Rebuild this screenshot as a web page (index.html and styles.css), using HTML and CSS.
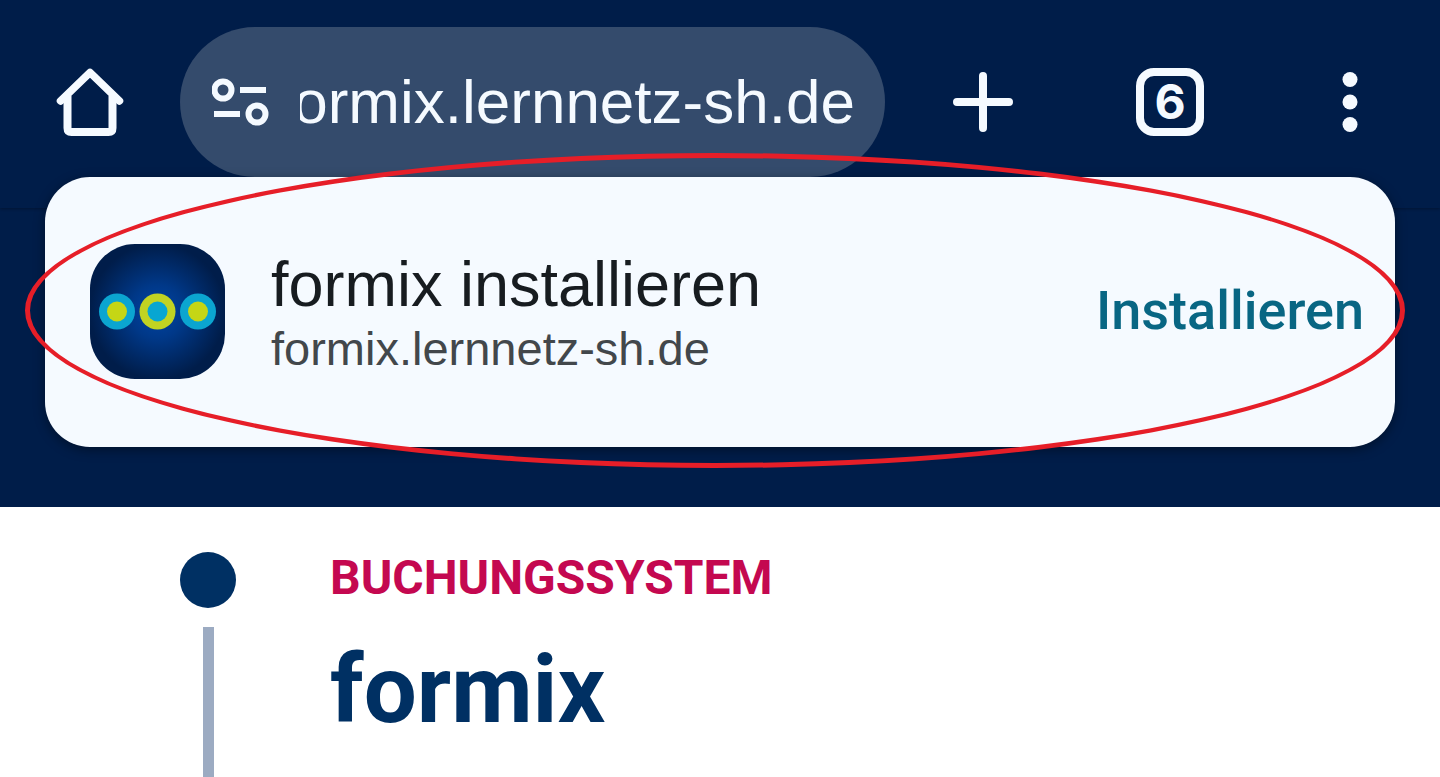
FILE: index.html
```html
<!DOCTYPE html>
<html lang="de">
<head>
    <meta charset="UTF-8">
    <meta name="viewport" content="width=device-width, initial-scale=1.0">
    <title>formix installieren</title>
    <link rel="stylesheet" href="styles.css">
</head>
<body>
    <header class="browser">
        <div class="toolbar">
            <button class="tool" type="button" aria-label="Startseite">
                <svg width="72" height="72" viewBox="0 0 72 72" fill="none" stroke="currentColor" stroke-width="8" stroke-linecap="round" stroke-linejoin="round">
                    <path d="M6.500 35 L36 6.500 L65.500 35" stroke-width="7.500" />
                    <path d="M13.500 30 V62 Q13.500 66 17.500 66 H54.500 Q58.500 66 58.500 62 V30" stroke-linecap="butt" />
                </svg>
            </button>
            <div class="address">
                <svg width="58" height="50" viewBox="0 0 58 50" fill="none" stroke="currentColor" stroke-width="6">
                    <circle cx="11" cy="13" r="8.500" />
                    <path d="M28 13 H54 M2 37 H28" />
                    <circle cx="45" cy="37" r="8.500" />
                </svg>
                <input class="url" type="text" value="formix.lernnetz-sh.de" aria-label="Adresse" spellcheck="false">
            </div>
            <button class="tool tool-new" type="button" aria-label="Neuer Tab">
                <svg width="60" height="60" viewBox="0 0 60 60" fill="none" stroke="currentColor" stroke-width="8" stroke-linecap="round">
                    <path d="M30 4 V56 M4 30 H56" />
                </svg>
            </button>
            <button class="tool" type="button" aria-label="6 offene Tabs">
                <span class="tab-count">6</span>
            </button>
            <button class="tool" type="button" aria-label="Menü">
                <svg width="60" height="60" viewBox="0 0 60 60" fill="currentColor">
                    <circle cx="30" cy="7.500" r="7.500" />
                    <circle cx="30" cy="30" r="7.500" />
                    <circle cx="30" cy="52.500" r="7.500" />
                </svg>
            </button>
        </div>

        <div class="install">
            <svg class="app-icon" viewBox="0 0 135 135">
                <defs>
                    <radialGradient id="glow">
                        <stop offset="0" stop-color="#0045a5" />
                        <stop offset="0.4" stop-color="#003888" />
                        <stop offset="1" stop-color="#001d4a" />
                    </radialGradient>
                </defs>
                <rect width="135" height="135" rx="45" fill="url(#glow)" />
                <circle cx="27" cy="67.500" r="18" fill="#0ba5d0" />
                <circle cx="27" cy="67.500" r="10" fill="#c5d615" />
                <circle cx="67.500" cy="67.500" r="18" fill="#c1d322" />
                <circle cx="67.500" cy="67.500" r="10" fill="#08a6d2" />
                <circle cx="108" cy="67.500" r="18" fill="#0ba5d0" />
                <circle cx="108" cy="67.500" r="10" fill="#c5d615" />
            </svg>
            <div class="app-text">
                <div class="app-name">formix installieren</div>
                <div class="app-host">formix.lernnetz-sh.de</div>
            </div>
            <button class="install-btn" type="button">Installieren</button>
            <div class="highlight"></div>
        </div>
    </header>

    <main class="page">
        <div class="marker">
            <div class="dot"></div>
            <div class="line"></div>
        </div>
        <div class="intro">
            <p class="kicker">BUCHUNGSSYSTEM</p>
            <h1>formix</h1>
        </div>
    </main>

    <script>
        // long addresses show their end
        const url = document.querySelector('.url');
        url.scrollLeft = url.scrollWidth;
    </script>
</body>
</html>
```
FILE: styles.css
```css
:root {
    --navy: #001d49;
    --pill: #344b6c;
    --card: #f5faff;
    --ink: #171c20;
    --muted: #42474b;
    --teal: #086683;
    --red: #e61e28;
    --blue: #003063;
    --pink: #c40850;
}

* {
    box-sizing: border-box;
}

body {
    margin: 0;
    min-height: 100vh;
    display: flex;
    flex-direction: column;
    background: #fff;
    font-family: "Liberation Sans", Arial, sans-serif;
}

button {
    border: 0;
    padding: 0;
    background: none;
    color: inherit;
    font: inherit;
    cursor: pointer;
}

svg {
    display: block;
    flex: none;
}

.browser {
    background: var(--navy);
    color: var(--card);
    padding-bottom: 60px;
}

.toolbar {
    display: flex;
    padding: 27px 0 31px;
    box-shadow: 0 1px 3px rgba(0, 0, 0, 0.3);
}

.tool {
    width: 180px;
    height: 150px;
    display: flex;
    align-items: center;
    justify-content: center;
}

.tool-new {
    width: 195px;
}

.address {
    flex: 1;
    min-width: 0;
    height: 150px;
    display: flex;
    align-items: center;
    gap: 30px;
    padding: 0 30px 0 32px;
    border-radius: 75px;
    background: var(--pill);
}

.url {
    flex: 1;
    min-width: 0;
    border: 0;
    padding: 0 0 2px;
    outline: 0;
    background: none;
    color: inherit;
    font-family: inherit;
    font-size: 62px;
}

.tab-count {
    width: 68px;
    height: 68px;
    border: 8px solid currentColor;
    border-radius: 18px;
    font: 700 48px/52px Inter, sans-serif;
}

.install {
    position: relative;
    display: flex;
    align-items: center;
    gap: 46px;
    margin: -31px 45px 0;
    padding: 67px 31px 68px 45px;
    border-radius: 45px;
    background: var(--card);
    box-shadow: 0 3px 12px rgba(0, 0, 0, 0.4);
}

.app-icon {
    width: 135px;
    height: 135px;
}

.app-text {
    flex: 1;
    padding-top: 4px;
}

.app-name {
    color: var(--ink);
    font-size: 63px;
    line-height: 70px;
}

.app-host {
    color: var(--muted);
    font-size: 47px;
    line-height: 60px;
}

.install-btn {
    padding-bottom: 3px;
    color: var(--teal);
    font-family: Roboto, sans-serif;
    font-size: 54px;
    font-weight: 500;
}

/* red ring around the install card */
.highlight {
    position: absolute;
    inset: -24px -10px -21px -20px;
    border: 5px solid var(--red);
    border-radius: 50%;
    pointer-events: none;
}

.page {
    flex: 1;
    display: flex;
    gap: 94px;
    padding: 45px 180px 0;
    font-family: Roboto, sans-serif;
}

.marker {
    display: flex;
    flex-direction: column;
    align-items: center;
    gap: 19px;
}

.dot {
    width: 56px;
    height: 56px;
    border-radius: 50%;
    background: var(--blue);
}

.line {
    flex: 1;
    width: 11px;
    background: #9cabc2;
}

.kicker {
    margin: 0;
    color: var(--pink);
    font-size: 48px;
    font-weight: 700;
    line-height: 52px;
}

h1 {
    margin: 30px 0 0;
    color: var(--blue);
    font-size: 94px;
    font-weight: 700;
    line-height: 112px;
}
```
